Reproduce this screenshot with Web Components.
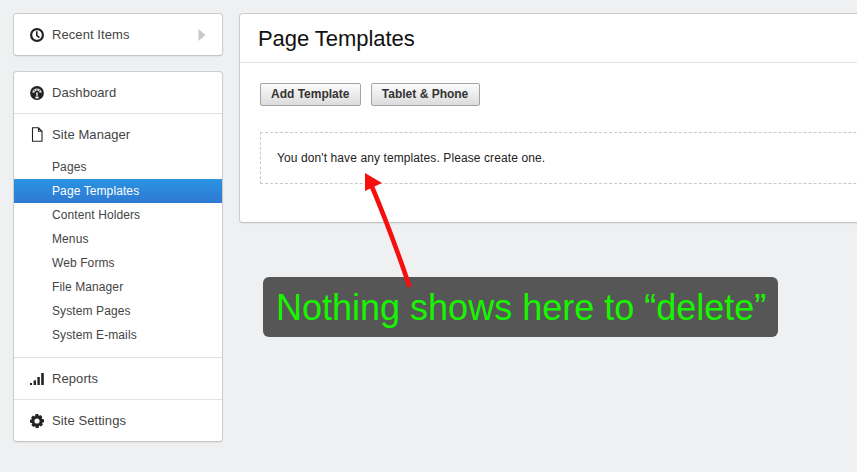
<!DOCTYPE html>
<html>
<head>
<meta charset="utf-8">
<title>Page Templates</title>
<style>
  html, body { margin: 0; height: 100%; overflow: hidden; background: #eef0f2; }
  body { font-family: "Liberation Sans", Arial, sans-serif; }
</style>
</head>
<body>
<admin-page>
  <side-card>
    <nav-row label="Recent Items" icon="clock" arrow></nav-row>
  </side-card>
  <side-card slot="nav">
    <nav-row label="Dashboard" icon="gauge"></nav-row>
    <nav-row label="Site Manager" icon="file" divided></nav-row>
    <sub-list>
      <sub-item>Pages</sub-item>
      <sub-item active>Page Templates</sub-item>
      <sub-item>Content Holders</sub-item>
      <sub-item>Menus</sub-item>
      <sub-item>Web Forms</sub-item>
      <sub-item>File Manager</sub-item>
      <sub-item>System Pages</sub-item>
      <sub-item>System E-mails</sub-item>
    </sub-list>
    <nav-row label="Reports" icon="bars" divided></nav-row>
    <nav-row label="Site Settings" icon="gear" divided></nav-row>
  </side-card>
  <main-panel slot="main" heading="Page Templates">
    <ui-button slot="actions">Add Template</ui-button>
    <ui-button slot="actions">Tablet &amp; Phone</ui-button>
    You don't have any templates. Please create one.
  </main-panel>
  <note-callout slot="over">Nothing shows here to “delete”</note-callout>
</admin-page>

<script>
const icons = {
  clock: `<svg width="14" height="14" viewBox="0 0 14 14"><circle cx="7" cy="7" r="5.9" fill="none" stroke="#222" stroke-width="2.2"/><path d="M6.8 3.2V7.3L9.4 9.6" fill="none" stroke="#222" stroke-width="1.6"/></svg>`,
  gauge: `<svg width="14" height="14" viewBox="0 0 14 14"><circle cx="7" cy="7" r="6.9" fill="#222"/><path d="M2.2 6.4A4.9 4.9 0 0 1 11.8 6.4L9.6 6.8A2.7 2.7 0 0 0 4.4 6.8Z" fill="#ddd"/><path d="M6.2 3.4H7.8V4.6H6.2Z M3.6 4.6L4.6 4 5 5 4.2 5.6Z M10.4 4.6L9.4 4 9 5 9.8 5.6Z" fill="#333"/><path d="M6.2 6.4H7.8L7.5 10.2H6.5Z" fill="#fff"/><rect x="5.4" y="10.6" width="3.2" height="1.8" fill="#fff"/></svg>`,
  file: `<svg width="12" height="15" viewBox="0 0 12 15"><path d="M1.5 .8H7.5L11 4.3V14.2H1.5Z M7.5 .8V4.3H11" fill="#fff" stroke="#222" stroke-width="1.1"/></svg>`,
  bars: `<svg width="14" height="12" viewBox="0 0 14 12"><g fill="#222"><rect x="0" y="10" width="2" height="2"/><rect x="3.6" y="7.4" width="2.4" height="4.6"/><rect x="7.4" y="4" width="2.4" height="8"/><rect x="11.2" y="0" width="2.6" height="12"/></g></svg>`,
  gear: `<svg width="14" height="14" viewBox="0 0 14 14"><path fill="#222" fill-rule="evenodd" d="M5.7 0H8.3L8.7 2 10.4 1.1 12.4 3 11.5 4.8 14 5.5V8.2L12 8.7 12.9 10.5 11 12.5 9.2 11.5 8.5 14H5.7L5.2 12 3.4 12.9 1.4 11 2.4 9.2 0 8.5V5.7L2 5.2 1.1 3.4 3 1.4 4.8 2.4ZM7 4.4A2.6 2.6 0 1 0 7 9.6 2.6 2.6 0 1 0 7 4.4Z"/></svg>`
};

class AdminPage extends HTMLElement {
  constructor() {
    super();
    this.attachShadow({ mode: 'open' });
    this.shadowRoot.innerHTML = `
      <style>
        :host { display: flex; gap: 16px; padding: 13px; position: relative; width: 1000px; box-sizing: border-box; }
        .side { width: 210px; flex: none; display: flex; flex-direction: column; gap: 15px; }
        .main { flex: 1; min-width: 0; }
      </style>
      <div class="side"><slot></slot><slot name="nav"></slot></div>
      <div class="main"><slot name="main"></slot></div>
      <slot name="over"></slot>
    `;
  }
}

class SideCard extends HTMLElement {
  constructor() {
    super();
    this.attachShadow({ mode: 'open' });
    this.shadowRoot.innerHTML = `
      <style>
        :host { display: block; background: #fff; border: 1px solid #cdcdcd; border-bottom-color: #c4c4c4; border-radius: 4px; box-shadow: 0 1px 2px rgba(0,0,0,.06); overflow: hidden; }
      </style>
      <slot></slot>
    `;
  }
}

class NavRow extends HTMLElement {
  constructor() {
    super();
    this.attachShadow({ mode: 'open' });
  }
  connectedCallback() {
    const arrow = this.hasAttribute('arrow')
      ? `<svg class="arrow" width="8" height="12" viewBox="0 0 8 12"><path d="M.5 0L7.5 6 .5 12Z" fill="#c8c8c8"/></svg>`
      : '';
    this.shadowRoot.innerHTML = `
      <style>
        :host { display: block; }
        :host([divided]) { border-top: 1px solid #e2e2e2; }
        .row { display: flex; align-items: center; height: 41px; padding: 0 16px; color: #444; font-size: 13px; letter-spacing: .08px; }
        .icon { width: 14px; display: flex; justify-content: center; margin-right: 8px; flex: none; }
        .label { flex: 1; }
      </style>
      <div class="row"><span class="icon">${icons[this.getAttribute('icon')]}</span><span class="label">${this.getAttribute('label')}</span>${arrow}</div>
    `;
  }
}

class SubList extends HTMLElement {
  constructor() {
    super();
    this.attachShadow({ mode: 'open' });
    this.shadowRoot.innerHTML = `
      <style>:host { display: block; padding-bottom: 10px; }</style>
      <slot></slot>
    `;
  }
}

class SubItem extends HTMLElement {
  constructor() {
    super();
    this.attachShadow({ mode: 'open' });
    this.shadowRoot.innerHTML = `
      <style>
        :host { display: block; height: 24px; line-height: 24px; padding-left: 38px; font-size: 12px; letter-spacing: .1px; color: #444; }
        :host([active]) { color: #fff; background: linear-gradient(#2a93e2, #2f79d2); }
      </style>
      <slot></slot>
    `;
  }
}

class MainPanel extends HTMLElement {
  constructor() {
    super();
    this.attachShadow({ mode: 'open' });
  }
  connectedCallback() {
    this.shadowRoot.innerHTML = `
      <style>
        :host { display: block; background: #fff; border: 1px solid #cdcdcd; border-bottom-color: #c4c4c4; border-radius: 4px; box-shadow: 0 1px 2px rgba(0,0,0,.06); }
        h1 { margin: 0; font-size: 22px; font-weight: normal; line-height: 47px; padding: 1px 0 0 18px; letter-spacing: -.05px; color: #111; border-bottom: 1px solid #e4e4e4; }
        .actions { display: flex; gap: 10px; padding: 20px 20px 0; }
        .empty { margin: 26px 0 38px 20px; height: 50px; line-height: 50px; padding-left: 16px; border: 1px dashed #c9c9c9; font-size: 12px; letter-spacing: .1px; color: #222; }
      </style>
      <h1>${this.getAttribute('heading')}</h1>
      <div class="actions"><slot name="actions"></slot></div>
      <div class="empty"><slot></slot></div>
    `;
  }
}

class UiButton extends HTMLElement {
  constructor() {
    super();
    this.attachShadow({ mode: 'open' });
    this.shadowRoot.innerHTML = `
      <style>
        :host { display: block; height: 21px; line-height: 21px; padding: 0 10.4px 0 10px; border: 1px solid #a3a3a3; border-radius: 2px; background: linear-gradient(#fbfbfb, #dcdcdc); font-size: 12px; font-weight: bold; color: #333; }
      </style>
      <slot></slot>
    `;
  }
}

class NoteCallout extends HTMLElement {
  constructor() {
    super();
    this.attachShadow({ mode: 'open' });
    this.shadowRoot.innerHTML = `
      <style>
        :host { position: absolute; left: 263px; top: 277px; display: block; width: 515px; height: 60px; box-sizing: border-box; padding-left: 13px; line-height: 62px; background: #555655; border-radius: 6px; color: #18f500; font-size: 36px; white-space: nowrap; }
        svg { position: absolute; left: 90px; top: -110px; overflow: visible; }
      </style>
      <slot></slot>
      <svg width="70" height="125" viewBox="0 0 70 125">
        <path d="M17 15Q37 62 56 118" fill="none" stroke="#f5100f" stroke-width="4.6" stroke-linecap="round"/>
        <path d="M12 6L29 16 12 24Z" fill="#f5100f"/>
      </svg>
    `;
  }
}

customElements.define('admin-page', AdminPage);
customElements.define('side-card', SideCard);
customElements.define('nav-row', NavRow);
customElements.define('sub-list', SubList);
customElements.define('sub-item', SubItem);
customElements.define('main-panel', MainPanel);
customElements.define('ui-button', UiButton);
customElements.define('note-callout', NoteCallout);
</script>
</body>
</html>
